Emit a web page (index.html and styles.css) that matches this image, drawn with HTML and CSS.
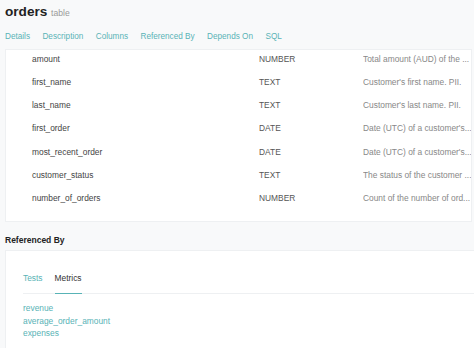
FILE: index.html
```html
<!DOCTYPE html>
<html>
<head>
<meta charset="utf-8">
<link rel="stylesheet" href="styles.css">
</head>
<body>
<div class="page">
  <header class="header">
    <h1 class="title">orders <span class="kind">table</span></h1>
    <nav class="tabs">
      <a class="tab">Details</a>
      <a class="tab">Description</a>
      <a class="tab">Columns</a>
      <a class="tab">Referenced By</a>
      <a class="tab">Depends On</a>
      <a class="tab">SQL</a>
    </nav>
  </header>

  <section class="card columns-card">
    <div class="rows">
      <div class="row"><span class="name">amount</span><span class="type">NUMBER</span><span class="desc">Total amount (AUD) of the ...</span></div>
      <div class="row"><span class="name">first_name</span><span class="type">TEXT</span><span class="desc">Customer's first name. PII.</span></div>
      <div class="row"><span class="name">last_name</span><span class="type">TEXT</span><span class="desc">Customer's last name. PII.</span></div>
      <div class="row"><span class="name">first_order</span><span class="type">DATE</span><span class="desc">Date (UTC) of a customer's...</span></div>
      <div class="row"><span class="name">most_recent_order</span><span class="type">DATE</span><span class="desc">Date (UTC) of a customer's...</span></div>
      <div class="row"><span class="name">customer_status</span><span class="type">TEXT</span><span class="desc">The status of the customer ...</span></div>
      <div class="row"><span class="name">number_of_orders</span><span class="type">NUMBER</span><span class="desc">Count of the number of ord...</span></div>
    </div>
  </section>

  <h2 class="section-title">Referenced By</h2>

  <section class="card refs-card">
    <div class="subtabs">
      <a class="subtab">Tests</a>
      <a class="subtab active">Metrics</a>
    </div>
    <ul class="links">
      <li><a class="link">revenue</a></li>
      <li><a class="link">average_order_amount</a></li>
      <li><a class="link">expenses</a></li>
    </ul>
  </section>
</div>
</body>
</html>
```

FILE: styles.css
```css
* { box-sizing: border-box; }
html, body {
  margin: 0;
  padding: 0;
  background: #f8f9fa;
  font-family: "Liberation Sans", Arial, sans-serif;
  font-size: 8.4px;
  color: #444;
  overflow: hidden;
}
.page {
  width: 474px;
  height: 348px;
  overflow: hidden;
}
.header {
  padding: 0 0 0 5px;
}
.title {
  margin: 0;
  padding-top: 2px;
  height: 22px;
  line-height: 20px;
  font-size: 13.6px;
  font-weight: 700;
  color: #222;
}
.kind {
  font-size: 8.6px;
  font-weight: 400;
  color: #999;
}
.tabs {
  display: flex;
  gap: 12.4px;
  height: 27px;
  padding-top: 9px;
  line-height: 12px;
  font-size: 8.2px;
}
.tab {
  color: #58b3b6;
}
.card {
  background: #fff;
  margin-left: 5px;
  border: 1px solid #eef0f2;
  border-right: none;
}
.columns-card {
  height: 173px;
  overflow: hidden;
  margin-right: 2px;
  border-right: 1px solid #eef0f2;
}
.rows {
  margin-top: -2.5px;
}
.row {
  display: grid;
  grid-template-columns: 227px 104px 1fr;
  height: 23.33px;
  line-height: 23.33px;
  padding-left: 26px;
  white-space: nowrap;
}
.name { color: #444; }
.type { color: #555; }
.desc {
  color: #888;
  overflow: hidden;
}
.section-title {
  margin: 0;
  padding: 12px 0 0 5px;
  height: 28px;
  line-height: 12px;
  font-size: 8.5px;
  font-weight: 700;
  color: #222;
}
.refs-card {
  height: 110px;
  padding: 20px 0 0 17px;
  border-bottom: none;
}
.subtabs {
  display: flex;
  gap: 12px;
  height: 23px;
  border-bottom: 1px solid #eef0f2;
  line-height: 14px;
}
.subtab {
  color: #58b3b6;
  height: 23px;
}
.subtab.active {
  color: #333;
  border-bottom: 1.5px solid #58b3b6;
}
.links {
  list-style: none;
  margin: 0;
  padding: 8px 0 0 0;
  line-height: 12.5px;
}
.link {
  color: #58b3b6;
}
```
